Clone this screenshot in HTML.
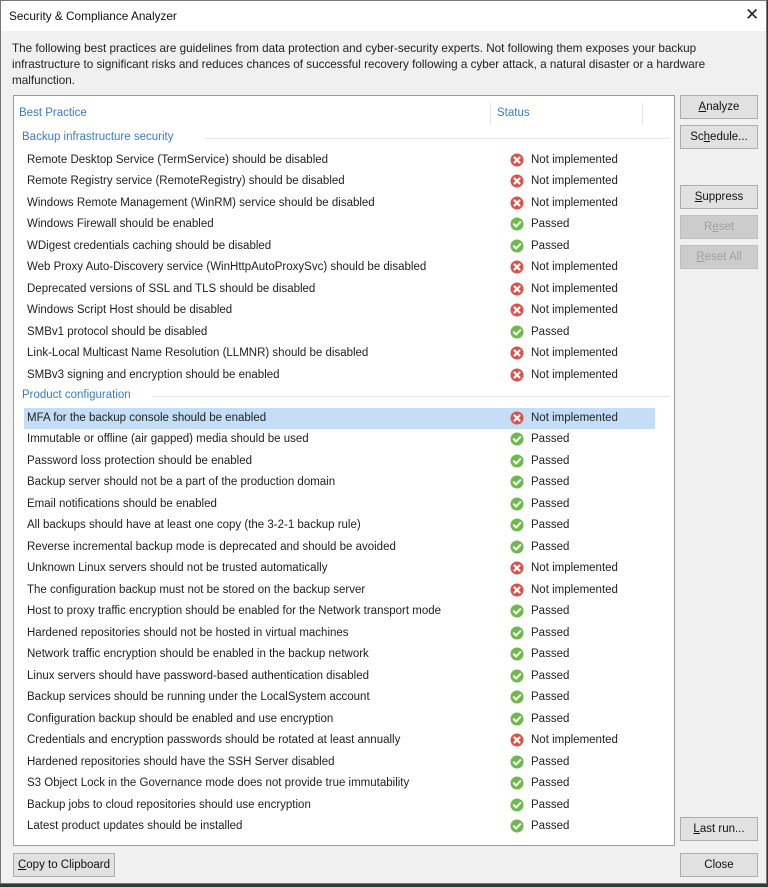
<!DOCTYPE html><html><head><style>
*{margin:0;padding:0;box-sizing:border-box}
body{width:768px;height:887px;background:#2b3a3a;font-family:"Liberation Sans",sans-serif;font-size:11.5px;color:#222;position:relative;overflow:hidden}
.win{position:absolute;left:0;top:0;width:767px;height:884px;background:#f0f0f0;border:1px solid #777}
.title{position:absolute;left:0;top:0;width:765px;height:30px;background:#fff}
.title span{position:absolute;left:8px;top:8px;font-size:11.8px;color:#111}
.x{position:absolute;left:744px;top:4px;font-size:17px;color:#222}
.desc{position:absolute;left:11px;top:40px;width:730px;line-height:16px;color:#222;font-size:11.7px}
.list{position:absolute;left:12px;top:94px;width:662px;height:751px;background:#fff;border:1px solid #999}
.hdr{position:absolute;top:11px;color:#3a7bc8}
.vl{position:absolute;top:7px;width:1px;height:22px;background:#e4e4e4}
.grp{position:absolute;left:8px;color:#3a7bc8;white-space:nowrap}
.gl{position:absolute;height:1px;background:#e6e6e6;right:4px}
.row{position:absolute;left:10px;width:631px;height:21px}
.row.sel{background:#c4def7}
.row .t{position:absolute;left:3px;top:4px;white-space:nowrap}
.row svg{position:absolute;left:486px;top:3px}
.row .s{position:absolute;left:507px;top:4px}
.btn{position:absolute;width:78px;height:24px;border:1px solid #adadad;background:#e1e1e1;text-align:center;line-height:22px;color:#111}
.btn.d{color:#a0a0a0;background:#ccc;border-color:#bfbfbf}
</style></head><body><div class="win">
<div class="title"><span>Security &amp; Compliance Analyzer</span><div class="x">✕</div></div>
<div class="desc">The following best practices are guidelines from data protection and cyber-security experts. Not following them exposes your backup infrastructure to significant risks and reduces chances of successful recovery following a cyber attack, a natural disaster or a hardware malfunction.</div>
<div class="list">
<div class="hdr" style="left:5px">Best Practice</div>
<div class="vl" style="left:476px"></div>
<div class="hdr" style="left:483px">Status</div>
<div class="vl" style="left:628px"></div>
<div id="rows"></div>
</div>
<div class="btn" style="left:679px;top:94px"><u>A</u>nalyze</div>
<div class="btn" style="left:679px;top:124px">Sc<u>h</u>edule...</div>
<div class="btn" style="left:679px;top:184px"><u>S</u>uppress</div>
<div class="btn d" style="left:679px;top:214px">R<u>e</u>set</div>
<div class="btn d" style="left:679px;top:244px"><u>R</u>eset All</div>
<div class="btn" style="left:679px;top:816px"><u>L</u>ast run...</div>
<div class="btn" style="left:12px;top:852px;width:102px"><u>C</u>opy to Clipboard</div>
<div class="btn" style="left:679px;top:852px">Close</div>
</div>
<script>
var F='<svg width="14" height="14" viewBox="0 0 14 14"><circle cx="7" cy="7" r="6.5" fill="#e0504a"/><path d="M4.5 4.5l5 5M9.5 4.5l-5 5" stroke="#fff" stroke-width="2.2" stroke-linecap="round"/></svg>';
var P='<svg width="14" height="14" viewBox="0 0 14 14"><circle cx="7" cy="7" r="6.5" fill="#6cbb4a"/><path d="M3.8 7.2l2.3 2.3 4.2-4.4" stroke="#fff" stroke-width="2" fill="none" stroke-linecap="round" stroke-linejoin="round"/></svg>';
var d=[["G","Backup infrastructure security"],
["Remote Desktop Service (TermService) should be disabled",0],
["Remote Registry service (RemoteRegistry) should be disabled",0],
["Windows Remote Management (WinRM) service should be disabled",0],
["Windows Firewall should be enabled",1],
["WDigest credentials caching should be disabled",1],
["Web Proxy Auto-Discovery service (WinHttpAutoProxySvc) should be disabled",0],
["Deprecated versions of SSL and TLS should be disabled",0],
["Windows Script Host should be disabled",0],
["SMBv1 protocol should be disabled",1],
["Link-Local Multicast Name Resolution (LLMNR) should be disabled",0],
["SMBv3 signing and encryption should be enabled",0],
["G","Product configuration"],
["MFA for the backup console should be enabled",0,1],
["Immutable or offline (air gapped) media should be used",1],
["Password loss protection should be enabled",1],
["Backup server should not be a part of the production domain",1],
["Email notifications should be enabled",1],
["All backups should have at least one copy (the 3-2-1 backup rule)",1],
["Reverse incremental backup mode is deprecated and should be avoided",1],
["Unknown Linux servers should not be trusted automatically",0],
["The configuration backup must not be stored on the backup server",0],
["Host to proxy traffic encryption should be enabled for the Network transport mode",1],
["Hardened repositories should not be hosted in virtual machines",1],
["Network traffic encryption should be enabled in the backup network",1],
["Linux servers should have password-based authentication disabled",1],
["Backup services should be running under the LocalSystem account",1],
["Configuration backup should be enabled and use encryption",1],
["Credentials and encryption passwords should be rotated at least annually",0],
["Hardened repositories should have the SSH Server disabled",1],
["S3 Object Lock in the Governance mode does not provide true immutability",1],
["Backup jobs to cloud repositories should use encryption",1],
["Latest product updates should be installed",1]];
var h='';
d.forEach(function(r,i){var y=32+i*21.5;
if(r[0]=="G"){var w=r[1].length*5.9+14;h+='<div class="grp" style="top:'+(y+3)+'px">'+r[1]+'</div><div class="gl" style="top:'+(y+10)+'px;left:'+w+'px"></div>';}
else h+='<div class="row'+(r[2]?' sel':'')+'" style="top:'+y+'px"><span class="t">'+r[0]+'</span>'+(r[1]?P:F)+'<span class="s">'+(r[1]?'Passed':'Not implemented')+'</span></div>';});
document.getElementById('rows').innerHTML=h;
</script></body></html>
